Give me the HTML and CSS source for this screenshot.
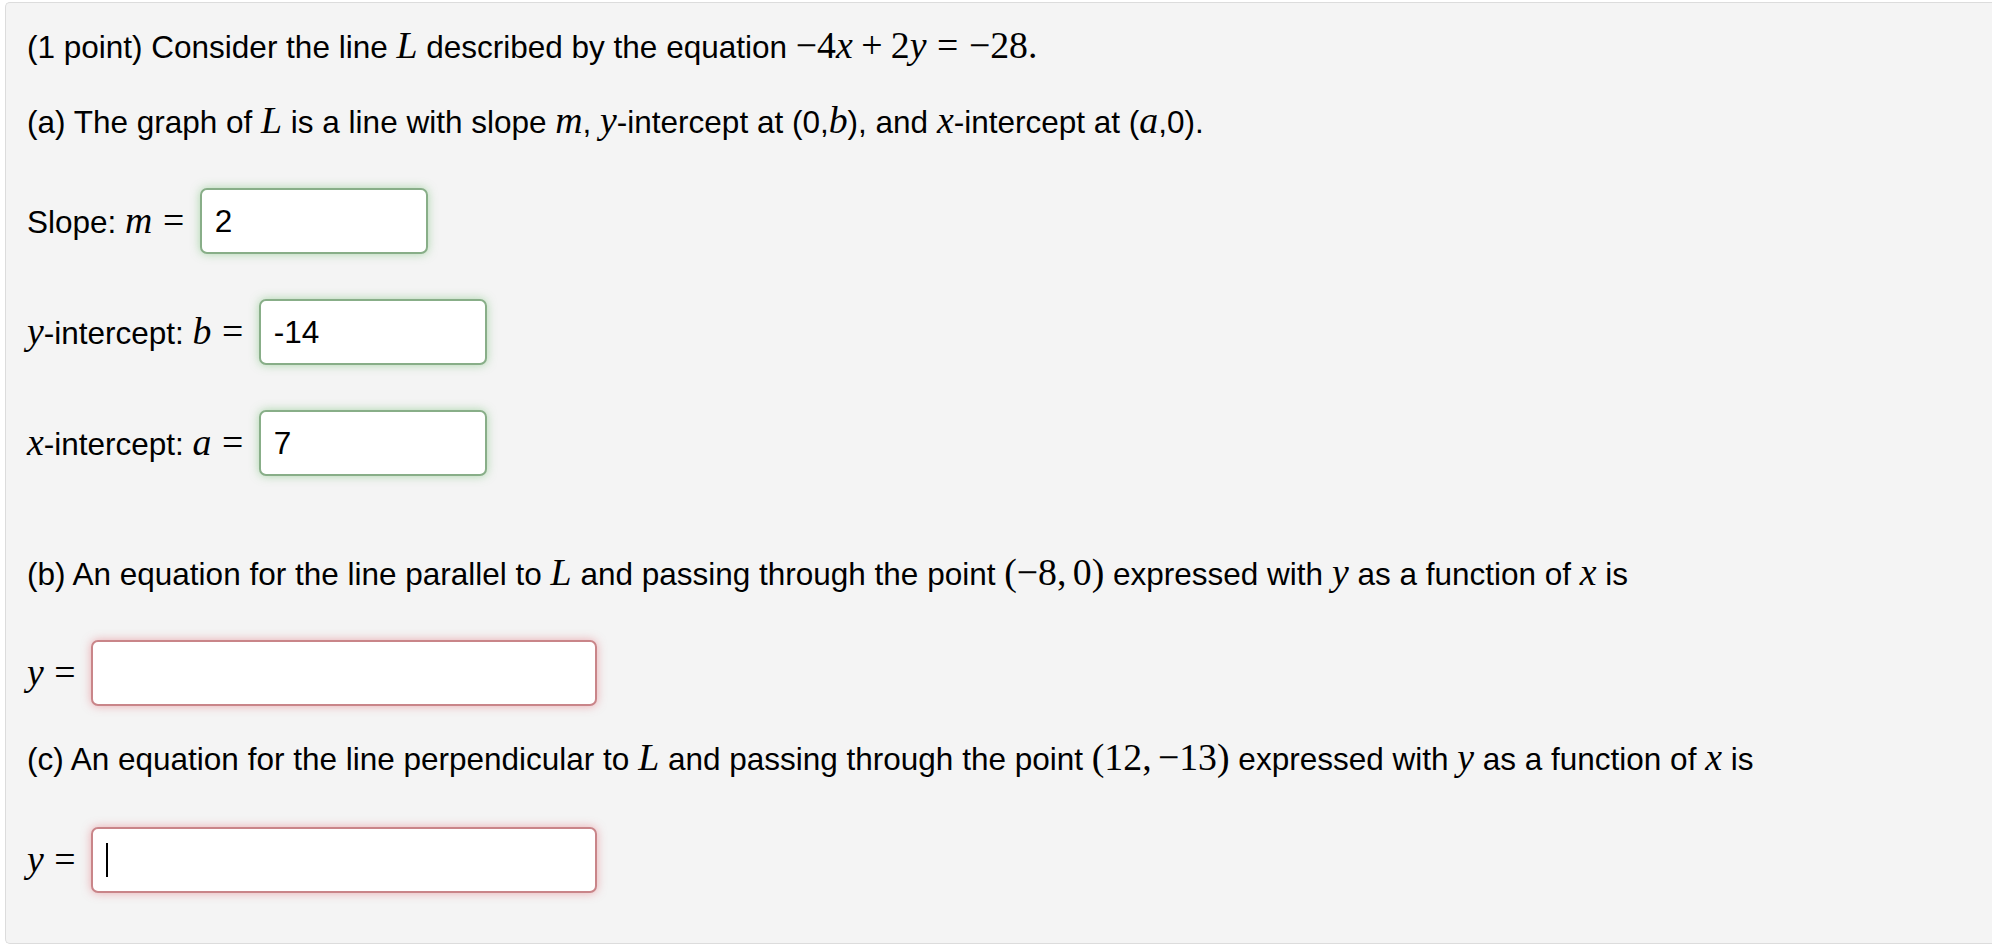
FILE: index.html
```html
<!DOCTYPE html>
<html lang="en">
<head>
<meta charset="utf-8">
<title>Line problem</title>
<link rel="stylesheet" href="styles.css">
</head>
<body>
<div class="box">
  <p class="txt first">(1 point) Consider the line <span class="m"><i>L</i></span> described by the equation <span class="m">−4<i>x</i><span class="bin">+</span>2<i>y</i><span class="rel">=</span>−28.</span></p>
  <p class="txt part-a">(a) The graph of <span class="m"><i>L</i></span> is a line with slope <span class="m"><i>m</i></span>, <span class="m"><i>y</i></span>-intercept at (0,<span class="m"><i>b</i></span>), and <span class="m"><i>x</i></span>-intercept at (<span class="m"><i>a</i></span>,0).</p>
  <div class="row r-slope"><span class="lbl">Slope: <span class="m"><i>m</i><span class="rel">=</span></span></span><input class="ans ok small" type="text" value="2"></div>
  <div class="row r-next"><span class="lbl"><span class="m"><i>y</i></span>-intercept: <span class="m"><i>b</i><span class="rel">=</span></span></span><input class="ans ok small" type="text" value="-14"></div>
  <div class="row r-next"><span class="lbl"><span class="m"><i>x</i></span>-intercept: <span class="m"><i>a</i><span class="rel">=</span></span></span><input class="ans ok small" type="text" value="7"></div>
  <p class="txt part-b">(b) An equation for the line parallel to <span class="m"><i>L</i></span> and passing through the point <span class="m">(−8,<span class="thin"></span>0)</span> expressed with <span class="m"><i>y</i></span> as a function of <span class="m"><i>x</i></span> is</p>
  <div class="row r-b"><span class="lbl"><span class="m"><i>y</i><span class="rel">=</span></span></span><input class="ans bad wide" type="text" value=""></div>
  <p class="txt part-c">(c) An equation for the line perpendicular to <span class="m"><i>L</i></span> and passing through the point <span class="m">(12,<span class="thin"></span>−13)</span> expressed with <span class="m"><i>y</i></span> as a function of <span class="m"><i>x</i></span> is</p>
  <div class="row r-c"><span class="lbl"><span class="m"><i>y</i><span class="rel">=</span></span></span><span class="field"><input class="ans bad wide" type="text" value=""><span class="caret"></span></span></div>
</div>
</body>
</html>
```
FILE: styles.css
```css
html, body {
  margin: 0;
  padding: 0;
  background: #ffffff;
}
body {
  font-family: "Liberation Sans", Arial, Helvetica, sans-serif;
  font-size: 31.5px;
  color: #000;
  overflow: hidden;
}
.box {
  margin: 2px 0 0 5px;
  border: 1px solid #dcdcdc;
  border-right: none;
  border-radius: 5px 0 0 5px;
  background: #f4f4f4;
  padding: 24px 0 50px 21px;
  display: flex;
  flex-direction: column;
  align-items: flex-start;
}
.txt {
  margin: 0;
  line-height: 40px;
  white-space: nowrap;
}
.m {
  font-family: "Liberation Serif", "Times New Roman", serif;
  font-size: 1.2em;
  line-height: 1;
}
.m i {
  font-style: italic;
}
.bin {
  margin: 0 0.222em;
}
.rel {
  margin: 0 0.278em;
}
.thin {
  display: inline-block;
  width: 0.167em;
}
.part-a { margin-top: 35px; }
.row {
  display: flex;
  align-items: center;
  height: 66px;
}
.r-slope { margin-top: 46px; }
.r-next { margin-top: 45px; }
.part-b { margin-top: 78px; }
.r-b { margin-top: 46px; }
.part-c { margin-top: 33px; }
.r-c { margin-top: 48px; }
.lbl {
  white-space: nowrap;
  margin-right: 5px;
}
.ans {
  box-sizing: border-box;
  height: 66px;
  border-radius: 7px;
  background: #fff;
  font-family: "Liberation Sans", Arial, Helvetica, sans-serif;
  font-size: 31.5px;
  color: #000;
  padding: 0 13px;
  outline: none;
  margin: 0;
}
.small { width: 228px; }
.wide { width: 506px; }
.ok {
  border: 2px solid #88ae88;
  box-shadow: 0 0 10px rgba(100, 185, 100, 0.5);
}
.bad {
  border: 2px solid #c98589;
  box-shadow: 0 0 10px rgba(225, 100, 110, 0.5);
}
.field {
  position: relative;
  display: inline-block;
  height: 66px;
}
.caret {
  position: absolute;
  left: 15px;
  top: 16px;
  width: 2px;
  height: 34px;
  background: #000;
}
```
